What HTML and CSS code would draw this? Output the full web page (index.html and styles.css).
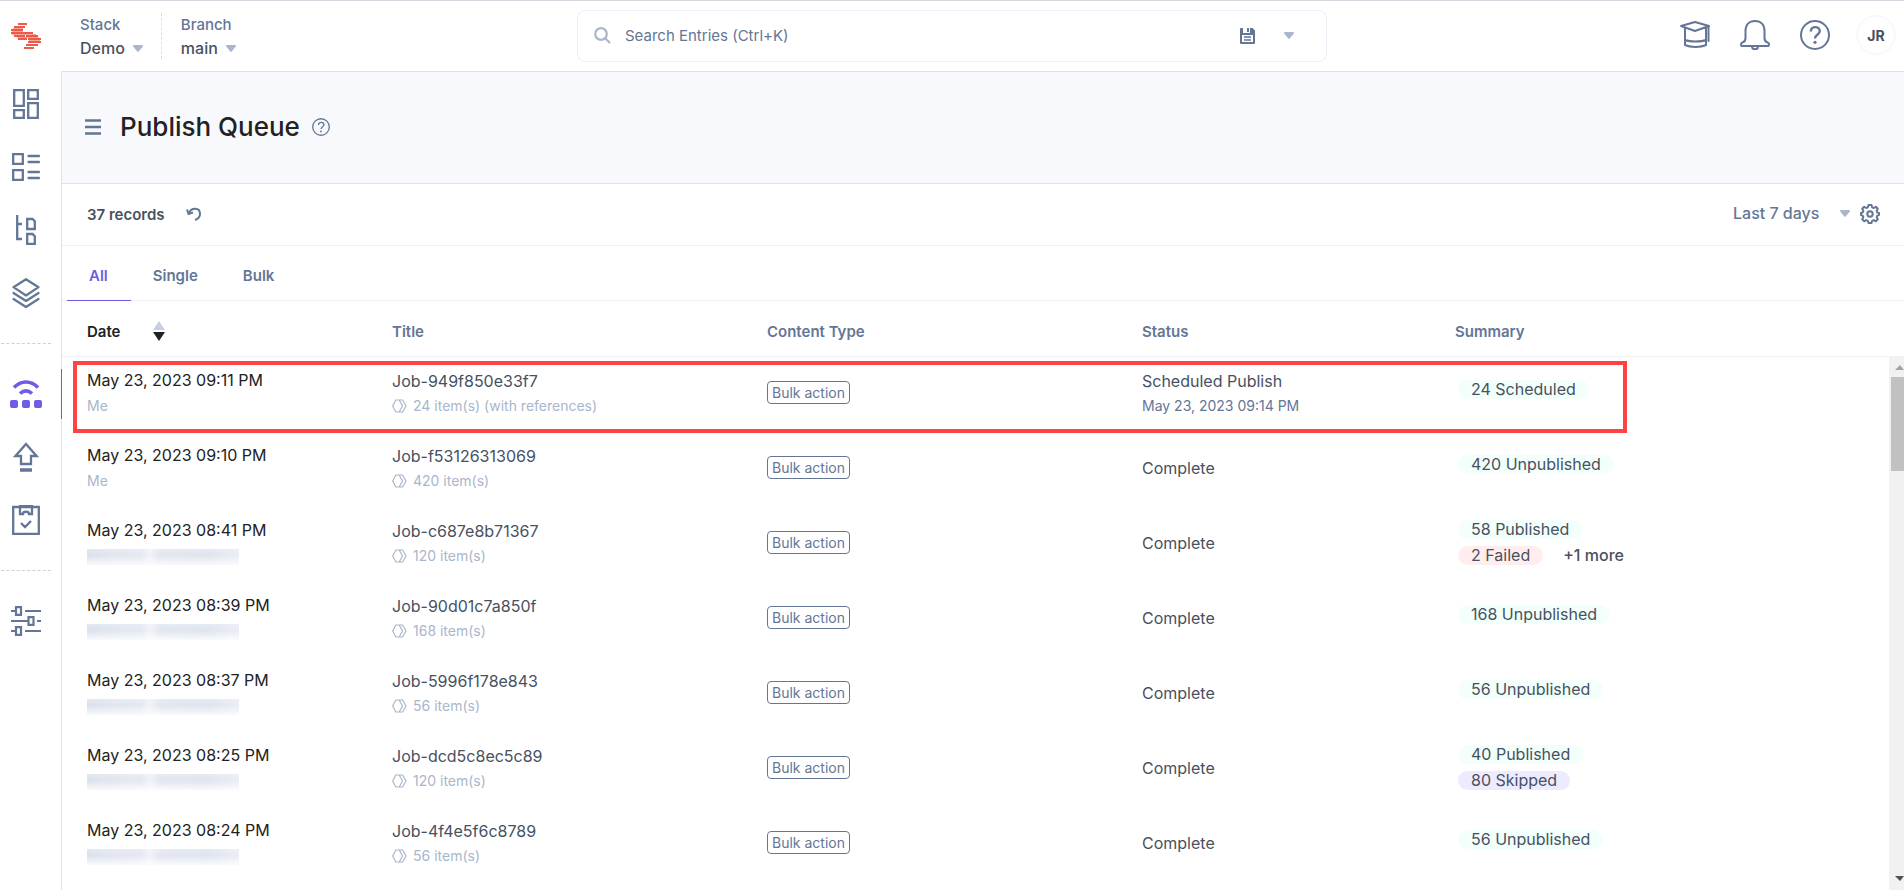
FILE: index.html
```html
<!DOCTYPE html>
<html lang="en">
<head>
  <meta charset="UTF-8">
  <meta name="viewport" content="width=device-width, initial-scale=1.0">
  <title>Publish Queue</title>
  <link rel="stylesheet" href="styles.css">
</head>
<body>
  <!-- shared icons -->
  <svg class="sprite" aria-hidden="true">
    <symbol id="caret" viewBox="0 0 10 7"><path d="M1 0h8a1 1 0 0 1 .8 1.600L5.700 6.600a1 1 0 0 1-1.400 0L.2 1.600A1 1 0 0 1 1 0z" fill="#a9b6cb"/></symbol>
    <symbol id="items" viewBox="0 0 15 14"><path d="M3.800 1h3.400l3.300 6-3.300 6H3.800L.7 7zM7.200 1h3.400L14 7l-3.400 6H7.200" fill="none" stroke="#a9b6cb" stroke-width="1.200"/></symbol>
  </svg>

  <header class="topbar">
    <div class="topbar-left">
      <a class="logo" href="#" aria-label="Home">
        <svg width="30" height="26" viewBox="0 0 30 26">
          <path d="M7 1h9M3 4h11M0 7h12M0 10h22M3 13h11M15 13h12M7 16h9M17 16h13M17 19h13M15 22h12M13 25h10" stroke="#ee5a4a" stroke-width="2"/>
          <path d="M2 5.500h10M1 8.500h11M1 11.500h24M6 14.500h22M18 17.500h11" stroke="#f6a69d"/>
        </svg>
      </a>
      <button class="picker" type="button">
        <span class="picker-label">Stack</span>
        <span class="picker-value">Demo <svg width="10" height="7"><use href="#caret"/></svg></span>
      </button>
      <button class="picker" type="button">
        <span class="picker-label">Branch</span>
        <span class="picker-value">main <svg width="10" height="7"><use href="#caret"/></svg></span>
      </button>
    </div>

    <form class="search" role="search">
      <svg width="17" height="17" viewBox="0 0 17 17" fill="none" stroke="#a9b6cb" stroke-width="2.200"><circle cx="7" cy="7" r="5.800"/><path d="M11.500 11.500l4.500 4.500"/></svg>
      <input class="search-input" type="text" placeholder="Search Entries (Ctrl+K)" aria-label="Search Entries">
      <button class="icon-btn" type="button" aria-label="Saved searches">
        <svg width="16" height="16" viewBox="0 0 16 16"><path d="M1 0h2v5h7V0h2.500L15 2.500V15a1 1 0 0 1-1 1H1a1 1 0 0 1-1-1V1a1 1 0 0 1 1-1zM2 7v7h11V7zM7 0h2v4H7z" fill="#647696" fill-rule="evenodd"/><path d="M4 9h7M4 12h7" stroke="#647696" stroke-width="1.500"/></svg>
      </button>
      <button class="icon-btn" type="button" aria-label="Search options"><svg width="10" height="7"><use href="#caret"/></svg></button>
    </form>

    <div class="topbar-right">
      <button class="icon-btn" type="button" aria-label="Academy">
        <svg width="30" height="30" viewBox="0 0 30 30" fill="none" stroke="#647696" stroke-width="2" stroke-linejoin="round" stroke-linecap="round"><path d="M1 6l14-4 14 4-14 5zM5 8v17c5 2.500 16 2.500 21 0V8M5 20c5 2 16 2 21 0M28.500 6v15"/></svg>
      </button>
      <button class="icon-btn" type="button" aria-label="Notifications">
        <svg width="30" height="30" viewBox="0 0 30 30" fill="none" stroke="#647696" stroke-width="2" stroke-linejoin="round"><path d="M15 1C9 1 5.500 5 5.500 11v7c0 3-1 4-3 4.500-2 .5-2 3.500 0 3.500h25c2 0 2-3 0-3.500-2-.5-3-1.500-3-4.500v-7C24.500 5 21 1 15 1zM12 26.500a3 2.800 0 0 0 6 0"/></svg>
      </button>
      <button class="icon-btn" type="button" aria-label="Help">
        <svg width="30" height="30" viewBox="0 0 30 30" fill="none" stroke="#647696" stroke-width="2"><circle cx="15" cy="15" r="14"/><path d="M10.800 11.500c0-6 9-5.500 9-.2 0 3.200-4.800 3.200-4.800 7.200" stroke-width="2.400"/><circle cx="15" cy="22.300" r="1.600" fill="#647696" stroke="none"/></svg>
      </button>
      <button class="avatar" type="button">JR</button>
    </div>
  </header>

  <div class="layout">
    <nav class="sidebar">
      <a class="nav-item" href="#" aria-label="Dashboard">
        <svg width="26" height="30" viewBox="0 0 26 30" fill="none" stroke="#647696" stroke-width="2.300"><path d="M1.200 1.200h9.600v15.600H1.200zM15.200 1.200h9.600v8.600h-9.600zM1.200 21.200h9.600v7.600H1.200zM15.200 14.200h9.600v14.600h-9.600z"/></svg>
      </a>
      <a class="nav-item" href="#" aria-label="Content models">
        <svg width="28" height="28" viewBox="0 0 28 28" fill="none" stroke="#647696" stroke-width="2.300"><path d="M1.200 1.200h9.600v9.600H1.200zM1.200 17.200h9.600v9.600H1.200z"/><path d="M16.500 3H27M16.500 9H27M16.500 19H27M16.500 25H27" stroke-linecap="round"/></svg>
      </a>
      <a class="nav-item" href="#" aria-label="Entries">
        <svg width="20" height="30" viewBox="0 0 20 30" fill="none" stroke="#647696" stroke-width="2.300"><path d="M1.200 0v24H6M1.200 9H6M11.200 4h5.300l2.300 2.300V14h-7.600zM11.200 19h5.300l2.300 2.300V29h-7.600z"/></svg>
      </a>
      <a class="nav-item" href="#" aria-label="Assets">
        <svg width="28" height="30" viewBox="0 0 28 30" fill="none" stroke="#647696" stroke-width="2.200" stroke-linejoin="round" stroke-linecap="round"><path d="M14 1.200l12.500 8L14 17.500 1.500 9.200zM1.500 15L14 23l12.500-8M1.500 21L14 29l12.500-8"/></svg>
      </a>
      <hr class="nav-divider">
      <a class="nav-item active" href="#" aria-label="Publish queue">
        <svg width="34" height="30" viewBox="0 0 34 30" fill="none" stroke="#6c5ce7"><path d="M5 8.500c7-7.500 17-7.500 24 0" stroke-width="3.500"/><path d="M11 14.500c4-3.500 8-3.500 12 0" stroke-width="3.500"/><g fill="#6c5ce7" stroke="none"><rect x="1" y="21" width="8" height="8" rx="2"/><rect x="13" y="21" width="8" height="8" rx="2"/><rect x="25" y="21" width="8" height="8" rx="2"/></g></svg>
      </a>
      <a class="nav-item" href="#" aria-label="Releases">
        <svg width="26" height="30" viewBox="0 0 26 30" fill="none" stroke="#647696" stroke-width="2.300"><path d="M13 2l10.500 12H18v8H8v-8H2.500z"/><path d="M7 28h12" stroke-width="3.500"/></svg>
      </a>
      <a class="nav-item" href="#" aria-label="Tasks">
        <svg width="28" height="30" viewBox="0 0 28 30" fill="none" stroke="#647696" stroke-width="2.300"><path d="M1.200 2h25.600v26.800H1.200zM8 1.200V9h3c0-3 6-3 6 0h3V1.200zM9 18l4 4 6-6"/></svg>
      </a>
      <hr class="nav-divider">
      <a class="nav-item" href="#" aria-label="Settings">
        <svg width="30" height="30" viewBox="0 0 30 30" fill="none" stroke="#647696" stroke-width="2.200"><path d="M0 5h5M14 5h16M0 15h17M26 15h4M0 25h5M14 25h16M5 1.100h5v7.800H5zM17.500 11.100h5v7.800h-5zM5 21.100h5v7.800H5z"/></svg>
      </a>
    </nav>

    <main class="content">
      <div class="page-header">
        <button class="icon-btn" type="button" aria-label="Menu">
          <svg width="16" height="16" viewBox="0 0 16 16"><path d="M0 1.500h16M0 8h16M0 14.500h16" stroke="#647696" stroke-width="2.500"/></svg>
        </button>
        <h1 class="page-title">Publish Queue</h1>
        <button class="icon-btn" type="button" aria-label="About publish queue">
          <svg width="18" height="18" viewBox="0 0 30 30" fill="none" stroke="#647696" stroke-width="2.200"><circle cx="15" cy="15" r="13.800"/><path d="M10.800 11.500c0-6 9-5.500 9-.2 0 3.200-4.800 3.200-4.800 7.200"/><circle cx="15" cy="22.300" r="1.600" fill="#647696" stroke="none"/></svg>
        </button>
      </div>

      <div class="toolbar">
        <span class="records">37 records</span>
        <button class="icon-btn" type="button" aria-label="Refresh">
          <svg width="16" height="14" viewBox="0 0 16 14" fill="none" stroke="#647696" stroke-width="2"><path d="M3 6c2-5.500 11-6 11 1 0 3-2 5-5 6"/><path d="M1 2.500l1.500 4.500 4.500-1.500"/></svg>
        </button>
        <div class="range">
          <select class="range-select" aria-label="Date range">
            <option>Last 7 days</option>
          </select>
          <svg width="10" height="7"><use href="#caret"/></svg>
        </div>
        <button class="icon-btn" type="button" aria-label="Table settings">
          <svg width="20" height="20" viewBox="0 0 20 20" fill="none" stroke="#647696" stroke-width="2" stroke-linejoin="round"><path d="M8.500 1h3l.6 2.300 1.700.7 2-1.200 2 2-1.100 2 .6 1.700 1.700.5v2l-1.700.6-.6 1.700 1.100 2-2 2-2-1.200-1.700.7-.6 2.200h-3l-.6-2.200-1.700-.7-2 1.200-2-2 1.100-2-.6-1.700L1 11V9l1.700-.5.6-1.700-1.100-2 2-2 2 1.200 1.700-.7z"/><circle cx="10" cy="10" r="2.700"/></svg>
        </button>
      </div>

      <div class="tabs" role="tablist">
        <button class="tab selected" type="button" role="tab">All</button>
        <button class="tab" type="button" role="tab">Single</button>
        <button class="tab" type="button" role="tab">Bulk</button>
      </div>

      <div class="table-wrap">
        <table class="queue">
          <colgroup>
            <col class="col-date"><col class="col-title"><col class="col-type"><col class="col-status"><col>
          </colgroup>
          <thead>
            <tr>
              <th class="sorted"><span class="sort">Date <svg width="12" height="20" viewBox="0 0 12 20"><path d="M6 0l6 9H0z" fill="#c5cfe0"/><path d="M0 11h12l-6 9z" fill="#222"/></svg></span></th>
              <th>Title</th>
              <th>Content Type</th>
              <th>Status</th>
              <th>Summary</th>
            </tr>
          </thead>
          <tbody>
            <tr>
              <td class="top"><div class="date">May 23, 2023 09:11 PM</div><div class="sub">Me</div></td>
              <td class="top"><div class="job">Job-949f850e33f7</div><div class="sub"><svg width="15" height="14"><use href="#items"/></svg>24 item(s) (with references)</div></td>
              <td><span class="tag">Bulk action</span></td>
              <td class="top"><div class="job">Scheduled Publish</div><div class="sub when">May 23, 2023 09:14 PM</div></td>
              <td><div class="line"><span class="pill green">24 Scheduled</span></div></td>
            </tr>
            <tr>
              <td class="top"><div class="date">May 23, 2023 09:10 PM</div><div class="sub">Me</div></td>
              <td class="top"><div class="job">Job-f53126313069</div><div class="sub"><svg width="15" height="14"><use href="#items"/></svg>420 item(s)</div></td>
              <td><span class="tag">Bulk action</span></td>
              <td>Complete</td>
              <td><div class="line"><span class="pill green">420 Unpublished</span></div></td>
            </tr>
            <tr>
              <td class="top"><div class="date">May 23, 2023 08:41 PM</div><div class="sub"><span class="hidden-name"></span></div></td>
              <td class="top"><div class="job">Job-c687e8b71367</div><div class="sub"><svg width="15" height="14"><use href="#items"/></svg>120 item(s)</div></td>
              <td><span class="tag">Bulk action</span></td>
              <td>Complete</td>
              <td><div class="line"><span class="pill green">58 Published</span></div><div class="line"><span class="pill red">2 Failed</span><a class="more" href="#">+1 more</a></div></td>
            </tr>
            <tr>
              <td class="top"><div class="date">May 23, 2023 08:39 PM</div><div class="sub"><span class="hidden-name"></span></div></td>
              <td class="top"><div class="job">Job-90d01c7a850f</div><div class="sub"><svg width="15" height="14"><use href="#items"/></svg>168 item(s)</div></td>
              <td><span class="tag">Bulk action</span></td>
              <td>Complete</td>
              <td><div class="line"><span class="pill green">168 Unpublished</span></div></td>
            </tr>
            <tr>
              <td class="top"><div class="date">May 23, 2023 08:37 PM</div><div class="sub"><span class="hidden-name"></span></div></td>
              <td class="top"><div class="job">Job-5996f178e843</div><div class="sub"><svg width="15" height="14"><use href="#items"/></svg>56 item(s)</div></td>
              <td><span class="tag">Bulk action</span></td>
              <td>Complete</td>
              <td><div class="line"><span class="pill green">56 Unpublished</span></div></td>
            </tr>
            <tr>
              <td class="top"><div class="date">May 23, 2023 08:25 PM</div><div class="sub"><span class="hidden-name"></span></div></td>
              <td class="top"><div class="job">Job-dcd5c8ec5c89</div><div class="sub"><svg width="15" height="14"><use href="#items"/></svg>120 item(s)</div></td>
              <td><span class="tag">Bulk action</span></td>
              <td>Complete</td>
              <td><div class="line"><span class="pill green">40 Published</span></div><div class="line"><span class="pill purple">80 Skipped</span></div></td>
            </tr>
            <tr>
              <td class="top"><div class="date">May 23, 2023 08:24 PM</div><div class="sub"><span class="hidden-name"></span></div></td>
              <td class="top"><div class="job">Job-4f4e5f6c8789</div><div class="sub"><svg width="15" height="14"><use href="#items"/></svg>56 item(s)</div></td>
              <td><span class="tag">Bulk action</span></td>
              <td>Complete</td>
              <td><div class="line"><span class="pill green">56 Unpublished</span></div></td>
            </tr>
          </tbody>
        </table>
        <div class="highlight"></div>
        <div class="scrollbar">
          <span class="arrow up"></span>
          <span class="thumb"></span>
          <span class="arrow down"></span>
        </div>
      </div>
    </main>
  </div>
</body>
</html>
```
FILE: styles.css
```css
* {
  box-sizing: border-box;
}
body {
  margin: 0;
  height: 100vh;
  overflow: hidden;
  display: flex;
  flex-direction: column;
  font-family: Inter, "Liberation Sans", sans-serif;
  font-size: 16px;
  color: #475161;
  background-color: #fff;
}
button, input, select {
  font: inherit;
  color: inherit;
  background: none;
  border: 0;
  padding: 0;
  margin: 0;
}
svg {
  flex: none;
  display: block;
}
.sprite {
  position: absolute;
  width: 0;
  height: 0;
}
.icon-btn {
  display: flex;
}

/* top bar */
.topbar {
  flex: none;
  height: 71px;
  border-top: 1px solid #d3d8e0;
  display: grid;
  grid-template-columns: 1fr minmax(300px, 750px) 1fr;
  align-items: center;
}
.topbar-left {
  display: flex;
  align-items: center;
}
.logo {
  width: 61px;
  padding: 0 11px;
}
.picker {
  height: 46px;
  padding: 1px 18px 0 19px;
  display: flex;
  flex-direction: column;
  justify-content: space-between;
  text-align: left;
  font-weight: 500;
  line-height: 22px;
}
.picker + .picker {
  border-left: 1px dashed #d9dde5;
}
.picker-label {
  font-size: 15px;
  color: #647696;
}
.picker-value {
  display: flex;
  align-items: center;
  gap: 8px;
}
.search {
  height: 52px;
  margin-bottom: 1px;
  border: 1px solid #edf1f7;
  border-radius: 8px;
  padding: 0 32px 0 16px;
  display: flex;
  align-items: center;
}
.search-input {
  flex: 1;
  min-width: 0;
  padding: 0 14px;
  font-size: 15px;
  outline: none;
}
.search-input::placeholder {
  color: #647696;
  opacity: 1;
}
.search .icon-btn + .icon-btn {
  margin-left: 28px;
}
.topbar-right {
  display: flex;
  align-items: center;
  justify-content: flex-end;
  gap: 30px;
  padding: 0 8px 2px 0;
}
.avatar {
  width: 40px;
  height: 40px;
  margin-left: -4px;
  border: 2px solid #f7f9fc;
  border-radius: 50%;
  font-size: 14px;
  font-weight: 700;
}

/* layout */
.layout {
  flex: 1;
  min-height: 0;
  display: flex;
}
.sidebar {
  width: 62px;
  border-right: 1px solid #dde3ee;
  padding-top: 8px;
  display: flex;
  flex-direction: column;
  gap: 13px;
}
.nav-item {
  height: 50px;
  padding-right: 9px;
  display: flex;
  align-items: center;
  justify-content: center;
}
.nav-item.active {
  margin-right: -1px;
  border-right: 1px solid #6c5ce7;
}
.nav-divider {
  width: 50px;
  margin: 12px 0 12px 1px;
  border: 0;
  border-top: 1px dashed #d0d0d0;
}
.content {
  flex: 1;
  min-width: 0;
  display: flex;
  flex-direction: column;
  border-top: 1px solid #dde3ee;
}
.page-header {
  height: 112px;
  padding: 0 23px 1px;
  display: flex;
  align-items: center;
  background-color: #f7f9fc;
  border-bottom: 1px solid #dde3ee;
}
.page-title {
  margin: 0 12px 0 19px;
  font-size: 26px;
  line-height: 32px;
  font-weight: 500;
  color: #222;
}
.toolbar {
  height: 62px;
  padding: 0 24px 0 25px;
  display: flex;
  align-items: center;
  border-bottom: 1px solid #edf1f7;
}
.records {
  margin-right: 21px;
  font-size: 15px;
  font-weight: 600;
}
.toolbar .icon-btn,
.range {
  padding-bottom: 2px;
}
.range {
  margin: 0 10px 0 auto;
  display: flex;
  align-items: center;
  gap: 20px;
}
.range-select {
  appearance: none;
  line-height: 20px;
  padding-bottom: 2px;
  font-weight: 500;
  color: #647696;
}
.tabs {
  height: 55px;
  padding-left: 5px;
  display: flex;
  border-bottom: 1px solid #edf1f7;
}
.tab {
  height: 55px;
  padding: 4px 23px 0 22px;
  font-size: 15px;
  font-weight: 600;
  color: #647696;
}
.tab.selected {
  color: #6c5ce7;
  border-bottom: 1px solid #6c5ce7;
}

/* queue table */
.table-wrap {
  position: relative;
  flex: 1;
  min-height: 0;
  overflow: hidden;
}
.queue {
  width: 100%;
  table-layout: fixed;
  border-collapse: separate;
  border-spacing: 0;
}
.col-date {
  width: 305px;
}
.col-title, .col-type {
  width: 375px;
}
.col-status {
  width: 313px;
}
.queue th {
  height: 56px;
  padding: 5px 0 0 25px;
  text-align: left;
  font-size: 15px;
  font-weight: 600;
  color: #647696;
  border-bottom: 1px solid #edf1f7;
}
.queue th.sorted {
  color: #222;
}
.sort {
  display: flex;
  align-items: center;
  gap: 33px;
}
.queue td {
  height: 75px;
  padding: 0 0 4px 25px;
  vertical-align: middle;
}
.queue td.top {
  padding-top: 12px;
  vertical-align: top;
}
.job {
  line-height: 24px;
}
.date {
  margin-bottom: 2px;
  line-height: 22px;
  color: #222;
}
.sub {
  display: flex;
  align-items: center;
  gap: 6px;
  font-size: 14px;
  line-height: 26px;
  color: #a9b6cb;
}
.sub.when {
  color: #647696;
}
.hidden-name {
  width: 152px;
  height: 16px;
  margin-top: 6px;
  background:
    linear-gradient(rgba(255, 255, 255, 0.2), rgba(255, 255, 255, 0) 40%, rgba(255, 255, 255, 0.8)),
    linear-gradient(90deg, #dbe1ec, #e2e6ef 20%, #e4e8f1 36%, #f0f2f7 41%, #e2e6ef 48%, #dfe4ee 80%, #eaedf4);
}
.tag {
  display: inline-block;
  padding: 0 4px;
  border: 1px solid #647696;
  border-radius: 4px;
  font-size: 14px;
  line-height: 21px;
  color: #647696;
}
.line {
  display: flex;
  align-items: center;
  gap: 20px;
  padding-left: 3px;
}
.line:first-child {
  margin-bottom: 7px;
}
.pill {
  padding: 0 13px;
  border-radius: 10px;
  line-height: 19px;
}
.pill.green {
  background-color: #f3fffb;
}
.pill.red {
  background-color: #ffeeed;
}
.pill.purple {
  background-color: #eeebff;
}
.more {
  font-weight: 500;
  line-height: 19px;
  color: #475161;
  text-decoration: none;
}

/* marks the newest job */
.highlight {
  position: absolute;
  top: 60px;
  left: 11px;
  width: 1554px;
  height: 72px;
  border: 4px solid #ff4343;
}

.scrollbar {
  position: absolute;
  top: 55px;
  right: 0;
  bottom: 0;
  width: 15px;
  padding: 9px 0 9px 2px;
  display: flex;
  flex-direction: column;
  background-color: #f1f1f1;
}
.arrow {
  margin-left: 4px;
  border: 5px solid transparent;
  border-right-width: 4px;
}
.arrow.up {
  border-top: 0;
  border-bottom-color: #a3a3a3;
}
.arrow.down {
  margin-top: auto;
  border-bottom: 0;
  border-top-color: #505050;
}
.thumb {
  height: 94px;
  margin-top: 7px;
  background-color: #c1c1c1;
}
```
